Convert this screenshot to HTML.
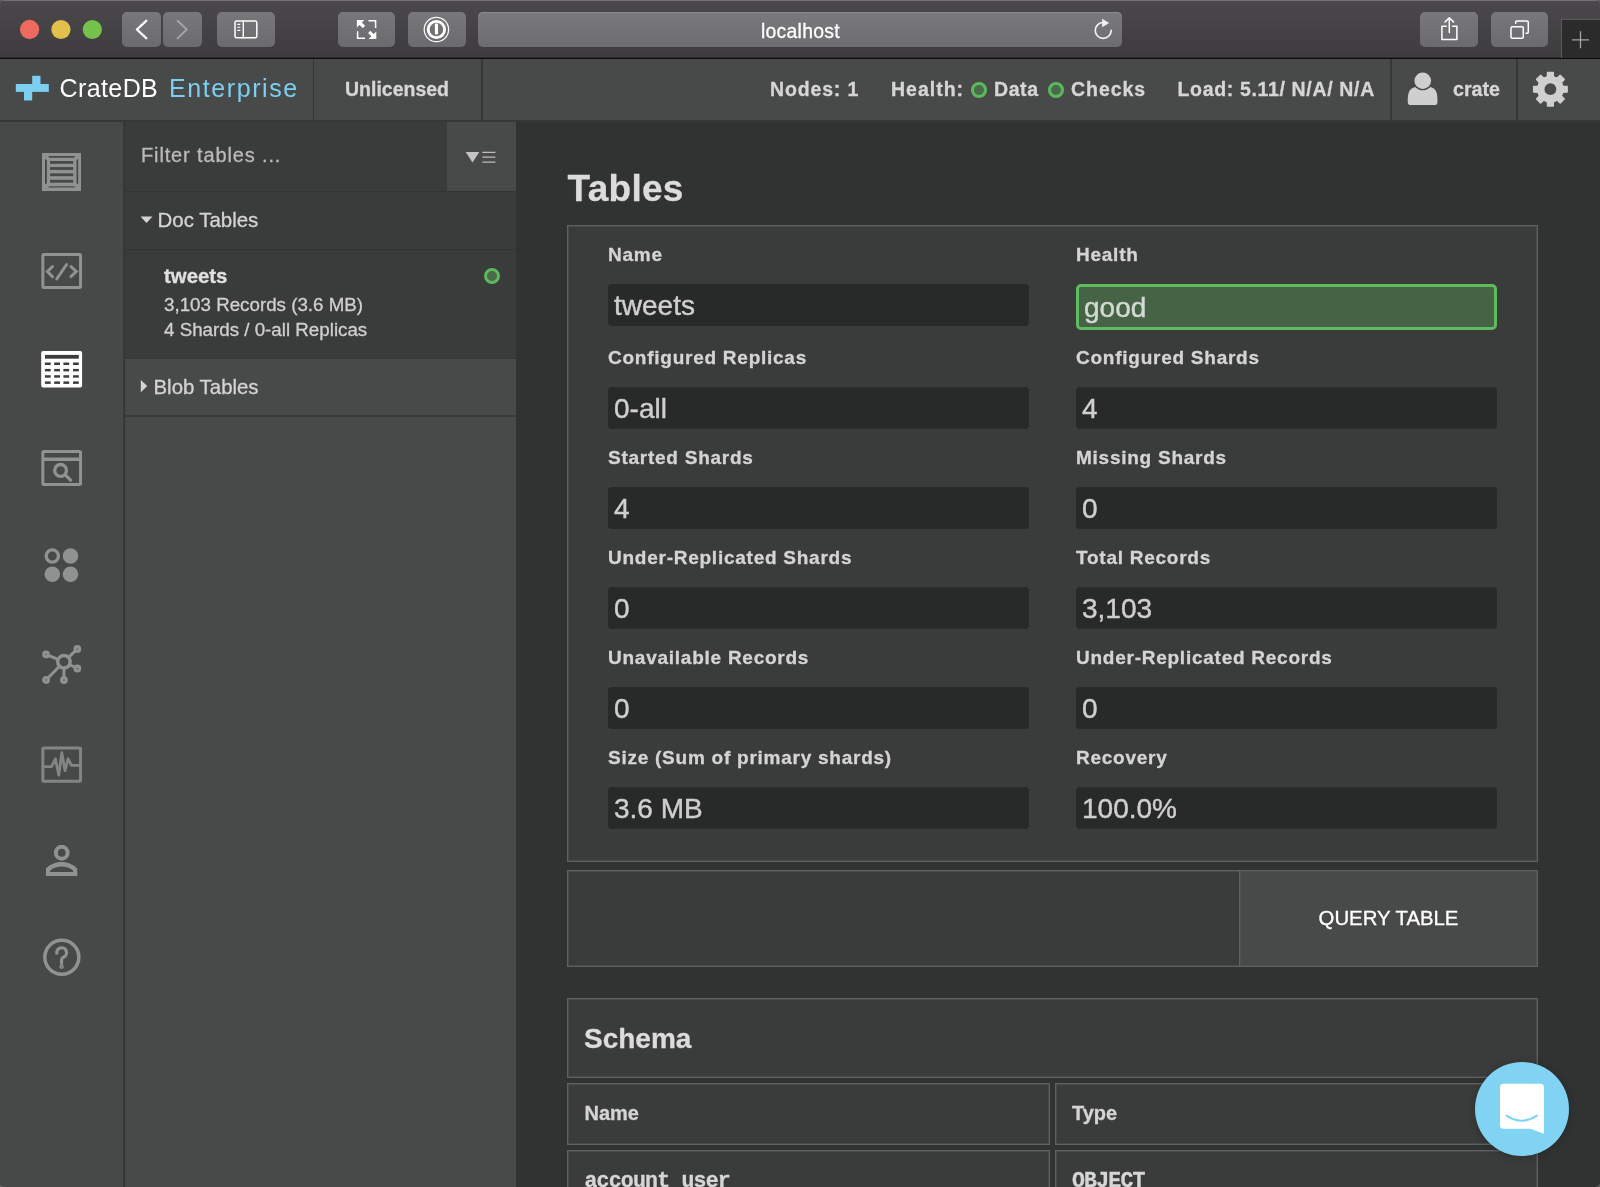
<!DOCTYPE html>
<html><head><meta charset="utf-8">
<style>
*{box-sizing:border-box;margin:0;padding:0}
#root{-webkit-text-stroke:.3px}
html,body{width:1600px;height:1187px;overflow:hidden;background:#313332;font-family:"Liberation Sans",sans-serif;color:#d9d9d9}
.abs{position:absolute}
#titlebar{left:0;top:0;width:1600px;height:58px;background:linear-gradient(#4a484b,#3e3c3f);border-top:1px solid #737173}
#tbline{left:0;top:57px;width:1600px;height:3px;background:linear-gradient(#2b2a2c 0,#2b2a2c 33%,#0c0c0c 33%,#0c0c0c 67%,#323433 67%)}
.tl{width:19px;height:19px;border-radius:50%;top:20px}
.btn{top:12px;height:35px;border-radius:5px;background:linear-gradient(#78787a,#6b6b6d)}
#url{left:478px;top:12px;width:644px;height:35px;border-radius:5px;background:linear-gradient(#7a797b,#6d6c6e);box-shadow:inset 0 1px 0 #8a898b}
#header{left:0;top:59px;width:1600px;height:61px;background:#484a49}
#hline{left:0;top:120px;width:1600px;height:2px;background:#363837}
.hsep{top:59px;width:2px;height:61px;background:#353736}
.htxt{font-weight:bold;font-size:19.5px;color:#d6d6d6;top:78px;line-height:22px;white-space:nowrap}
.dot{width:15px;height:15px;border-radius:50%;border:3px solid #5cb85c;background:#4a6a4b}
#nav{left:0;top:122px;width:123px;height:1065px;background:#474948}
#navline{left:123px;top:122px;width:2px;height:1065px;background:linear-gradient(90deg,#3a3c3b 50%,#323433 50%)}
#list{left:125px;top:122px;width:391px;height:1065px;background:#484a49}
.panel{background:#3a3c3b;border:1px solid #5f6160;box-shadow:inset 0 0 0 1px #484a49}
.lbl{font-weight:bold;font-size:19px;letter-spacing:.75px;margin-top:.6px;color:#d4d4d4;line-height:22px;white-space:nowrap}
.inp{height:42px;width:421px;border-radius:4px;background:#282a29;font-size:28px;line-height:43.6px;-webkit-text-stroke:.42px;padding-left:6px;color:#cfcfcf;white-space:nowrap}
.good{height:46px;border:3px solid #5ebc5f;background:#466346;line-height:41.6px;padding-left:5px;border-radius:5px;color:#d3d9d3}
.hd{font-weight:bold;font-size:20px;line-height:22px;color:#d4d4d4;white-space:nowrap}
.mono{font-family:"Liberation Mono",monospace;font-weight:bold;font-size:21.5px;letter-spacing:-.78px;line-height:24px;color:#d6d6d6;white-space:nowrap}
</style></head><body>
<div id="root" style="position:absolute;left:0;top:0;width:1600px;height:1187px;overflow:hidden;will-change:transform">
<!-- Safari title bar -->
<div id="titlebar" class="abs"></div>
<div id="tbline" class="abs"></div>
<svg class="abs" style="left:15px;top:15px" width="95" height="30" viewBox="15 15 95 30"><circle cx="29.6" cy="29.5" r="9.65" fill="#ee6a5e"/><circle cx="60.95" cy="29.5" r="9.6" fill="#e1c04c"/><circle cx="92.3" cy="29.5" r="9.6" fill="#75c14a"/></svg>
<div class="abs btn" style="left:122px;width:39px"></div>
<div class="abs btn" style="left:163px;width:39px"></div>
<div class="abs btn" style="left:217px;width:58px"></div>
<div class="abs btn" style="left:337.5px;width:57.5px"></div>
<div class="abs btn" style="left:408px;width:58px"></div>
<div id="url" class="abs"></div>
<div class="abs" style="left:761px;top:20.2px;font-size:19.4px;line-height:22px;letter-spacing:.25px;color:#fff">localhost</div>
<div class="abs btn" style="left:1420px;width:58px"></div>
<div class="abs btn" style="left:1490.7px;width:57.7px"></div>

<!-- Toolbar icons -->
<svg class="abs" style="left:122px;top:12px" width="160" height="35" viewBox="122 12 160 35" fill="none" stroke-linecap="round" stroke-linejoin="round">
<polyline points="146.2,20.8 136.9,29.5 146.2,38.2" stroke="#fff" stroke-width="2.3"/>
<polyline points="177.6,20.8 186.8,29.5 177.6,38.2" stroke="#a3a2a4" stroke-width="2"/>
<rect x="235" y="21" width="21.8" height="16.8" rx="1.5" stroke="#fff" stroke-width="1.5"/>
<line x1="243.3" y1="21" x2="243.3" y2="38" stroke="#fff" stroke-width="1.4"/>
<path d="M237.3,24.4h3M237.3,27.3h3M237.3,30.4h3" stroke="#fff" stroke-width="1.1" stroke-linecap="butt"/>
</svg>
<svg class="abs" style="left:338px;top:12px" width="130" height="35" viewBox="338 12 130 35" fill="none">
<g stroke="#fff" stroke-width="1.5">
<polyline points="368.5,20.7 375.6,20.7 375.6,28"/>
<polyline points="357.6,31.3 357.6,38.3 365,38.3"/>
</g>
<g fill="#fff">
<polygon points="356.9,19.9 364.4,19.9 356.9,27.6"/>
<polygon points="376.3,39 368.6,39 376.3,31.4"/>
</g>
<g stroke="#fff" stroke-width="3.2"><line x1="359.5" y1="22.5" x2="364" y2="27"/><line x1="373.7" y1="36.4" x2="369.2" y2="31.9"/></g>
<circle cx="436.4" cy="29.5" r="12.2" stroke="#fff" stroke-width="1.2"/>
<circle cx="436.4" cy="29.5" r="8.2" stroke="#fff" stroke-width="2.8"/>
<rect x="434.9" y="23.6" width="3.1" height="11" rx="1" fill="#fff"/>
</svg>
<svg class="abs" style="left:1090px;top:14px" width="26" height="30" viewBox="1090 14 26 30" fill="none">
<path d="M1103.2,22.45 A7.95 7.95 0 1 0 1111.15,30.4" stroke="#f0f0f0" stroke-width="1.7" stroke-linecap="round"/>
<polygon points="1102.1,18.7 1109.2,23 1102.1,27.3" fill="#f0f0f0"/>
</svg>
<svg class="abs" style="left:1420px;top:12px" width="130" height="35" viewBox="1420 12 130 35" fill="none" stroke="#fff" stroke-width="1.5" stroke-linejoin="round" stroke-linecap="round">
<path d="M1446.2,26.3 H1441.9 V39.5 H1456.9 V26.3 H1452.6" />
<path d="M1449.3,32.4 V17.9 M1445.1,21.9 L1449.3,17.7 L1453.5,21.9"/>
<rect x="1511" y="26.7" width="12.3" height="11.5" rx="1.3"/>
<path d="M1515.7,23.6 V22.3 Q1515.7,21 1517,21 H1527 Q1528.3,21 1528.3,22.3 V32 Q1528.3,33.3 1527,33.3 H1526"/>
</svg>
<!-- new tab -->
<div class="abs" style="left:1561px;top:19px;width:39px;height:39px;background:#2b2b2c;border-left:1px solid #59585a;border-top:1px solid #59585a"></div>
<svg class="abs" style="left:1570px;top:30px" width="22" height="20" viewBox="1570 30 22 20"><path d="M1572,39.8h17M1580.5,31.3v17" stroke="#a4a4a5" stroke-width="1.3" fill="none"/></svg>
<!-- App header -->
<div id="header" class="abs"></div>
<div id="hline" class="abs"></div>
<div class="abs hsep" style="left:313px;width:1px"></div>
<div class="abs hsep" style="left:481px"></div>
<div class="abs hsep" style="left:1390px"></div>
<div class="abs hsep" style="left:1516px"></div>
<div class="abs htxt" style="left:345px">Unlicensed</div>
<div class="abs htxt" style="left:770px;letter-spacing:.85px">Nodes: 1</div>
<div class="abs htxt" style="left:891px;letter-spacing:1px">Health:</div>
<div class="abs dot" style="left:971.2px;top:82px;width:15.8px;height:15.6px"></div>
<div class="abs htxt" style="left:994px;letter-spacing:.58px">Data</div>
<div class="abs dot" style="left:1048.3px;top:82px;width:15.8px;height:15.6px"></div>
<div class="abs htxt" style="left:1071px;letter-spacing:.95px">Checks</div>
<div class="abs htxt" style="left:1177.5px;letter-spacing:.66px">Load: 5.11/ N/A/ N/A</div>
<div class="abs htxt" style="left:1453px;font-size:19.7px">crate</div>
<!-- Logo -->
<svg class="abs" style="left:15px;top:75px" width="35" height="26" viewBox="15 75 35 26" fill="#7ccff0">
<rect x="15.8" y="84" width="33" height="7.9"/><rect x="32.2" y="75.8" width="8.3" height="9"/><rect x="24" y="91" width="8.2" height="9.5"/>
</svg>
<div class="abs" style="left:59.5px;top:74.4px;font-size:25px;line-height:28px;letter-spacing:.4px;color:#fff;white-space:nowrap;-webkit-text-stroke:0">CrateDB</div>
<div class="abs" style="left:169px;top:74.4px;font-size:25px;line-height:28px;letter-spacing:1.58px;color:#7ccff0;white-space:nowrap;-webkit-text-stroke:0">Enterprise</div>
<!-- user + gear -->
<svg class="abs" style="left:1405px;top:70px" width="36" height="38" viewBox="1405 70 36 38">
<path d="M1407.75,102 C1407.75,94 1408.5,88.3 1415.5,87 C1419,91 1426.5,91 1430,87 C1437,88.3 1437.5,94 1437.5,102 Q1437.5,105.1 1434.4,105.1 H1410.85 Q1407.75,105.1 1407.75,102Z" fill="#cfcfcf"/>
<circle cx="1422.75" cy="80.75" r="9.6" fill="#484a49"/>
<circle cx="1422.75" cy="80.75" r="8.3" fill="#cfcfcf"/>
</svg>
<svg class="abs" style="left:1532.4px;top:71.3px" width="36" height="36" viewBox="-0.4 -0.2 36 36">
<path d="M15.06,5.75 L15.23,1.33 L20.77,1.33 L20.94,5.75 L24.58,7.26 L27.83,4.25 L31.75,8.17 L28.74,11.42 L30.25,15.06 L34.67,15.23 L34.67,20.77 L30.25,20.94 L28.74,24.58 L31.75,27.83 L27.83,31.75 L24.58,28.74 L20.94,30.25 L20.77,34.67 L15.23,34.67 L15.06,30.25 L11.42,28.74 L8.17,31.75 L4.25,27.83 L7.26,24.58 L5.75,20.94 L1.33,20.77 L1.33,15.23 L5.75,15.06 L7.26,11.42 L4.25,8.17 L8.17,4.25 L11.42,7.26Z" fill="#cfcfcf" stroke="#cfcfcf" stroke-width="1.6" stroke-linejoin="round"/>
<circle cx="18" cy="18" r="13.2" fill="#cfcfcf"/>
<circle cx="18" cy="18" r="5.9" fill="#484a49"/>
</svg>
<!-- Left nav + list -->
<div id="nav" class="abs"></div>
<div id="navline" class="abs"></div>
<div id="list" class="abs"></div>

<!-- List panel -->
<div class="abs" style="left:125px;top:122px;width:391px;height:69px;background:#3a3c3b"></div>
<div class="abs" style="left:447px;top:122px;width:69px;height:69px;background:#484a49"></div>
<div class="abs" style="left:125px;top:191px;width:391px;height:1px;background:#333534"></div>
<div class="abs" style="left:125px;top:192px;width:391px;height:57px;background:#3a3c3b"></div>
<div class="abs" style="left:125px;top:249px;width:391px;height:1px;background:#333534"></div>
<div class="abs" style="left:125px;top:250px;width:391px;height:108px;background:#3a3c3b"></div>
<div class="abs" style="left:125px;top:358px;width:391px;height:1px;background:#353736"></div>
<div class="abs" style="left:125px;top:415px;width:391px;height:2px;background:#383a39"></div>
<div class="abs" style="left:141px;top:142.9px;font-size:20px;letter-spacing:.86px;line-height:24px;color:#bababa;white-space:nowrap">Filter tables ...</div>
<svg class="abs" style="left:465px;top:150px" width="32" height="14" viewBox="465 150 32 14"><path d="M465.7 152h13.6L472.5 162.5z" fill="#c4c4c4"/><path d="M482.4 152.3h13M482.4 157.2h13M482.4 162.1h13" stroke="#bcbcbc" stroke-width="1.3"/></svg>
<svg class="abs" style="left:140px;top:216px" width="13" height="8" viewBox="0 0 13 8"><path d="M0.5 0.5h12L6.5 7z" fill="#d4d4d4"/></svg>
<div class="abs" style="left:157.6px;top:207.5px;font-size:20.45px;line-height:24px;color:#d4d4d4;white-space:nowrap">Doc Tables</div>
<div class="abs" style="left:164px;top:264.4px;font-size:20.4px;font-weight:bold;line-height:24px;color:#e0e0e0;white-space:nowrap">tweets</div>
<div class="abs" style="left:164px;top:293.7px;font-size:18.75px;line-height:22px;color:#d0d0d0;white-space:nowrap">3,103 Records (3.6 MB)</div>
<div class="abs" style="left:164px;top:318.6px;font-size:18.75px;line-height:22px;color:#d0d0d0;white-space:nowrap">4 Shards / 0-all Replicas</div>
<div class="abs dot" style="left:484px;top:268px;width:16px;height:16px"></div>
<svg class="abs" style="left:140px;top:379px" width="8" height="14" viewBox="0 0 8 14"><path d="M0.8 1v12.2L7.3 7.1z" fill="#d4d4d4"/></svg>
<div class="abs" style="left:153.5px;top:374.5px;font-size:20.4px;line-height:24px;color:#d4d4d4;white-space:nowrap">Blob Tables</div>

<!-- Nav icons -->
<svg class="abs" style="left:42px;top:153px" width="39" height="38" viewBox="0 0 39 38">
<rect width="39" height="38" fill="#909291"/>
<g fill="#474948">
<polygon points="6.2,2.9 33.2,2.9 31.7,4.7 7.4,4.7"/>
<polygon points="7.2,33.2 32.2,33.2 33.2,34.6 6.2,34.6"/>
<polygon points="3,5.9 4.9,7 4.9,30.2 3,31.2"/>
<polygon points="34.5,7 36.2,5.9 36.2,31.2 34.5,30.2"/>
<rect x="8" y="8" width="23.2" height="2.8"/>
<rect x="8" y="14.1" width="23.2" height="2.8"/>
<rect x="8" y="20.4" width="23.2" height="2.8"/>
<rect x="8" y="26.8" width="23.2" height="2.9"/>
</g></svg>
<svg class="abs" style="left:41px;top:252px" width="42" height="38" viewBox="0 0 42 38" fill="none" stroke="#909291" stroke-width="3" stroke-linecap="round" stroke-linejoin="round">
<rect x="1.85" y="2.4" width="37.7" height="33.1" rx="1"/>
<polyline points="11.5,14.5 6.4,19.6 11.5,24.6" stroke-linejoin="miter"/>
<line x1="25.6" y1="12.5" x2="15.8" y2="26.9"/>
<polyline points="29.9,14.5 35.3,19.6 29.9,24.6" stroke-linejoin="miter"/>
</svg>
<svg class="abs" style="left:41px;top:351px" width="42" height="37" viewBox="0 0 42 37">
<rect x="0.2" y="0" width="40.9" height="36.5" rx="2" fill="#fff"/>
<g fill="#3c3e3d">
<rect x="3.9" y="3.9" width="33.9" height="3.8"/>
<rect x="3.9" y="11.5" width="5.8" height="2.5"/><rect x="13.2" y="11.5" width="5.8" height="2.5"/><rect x="22.4" y="11.5" width="5.8" height="2.5"/><rect x="32" y="11.5" width="5.8" height="2.5"/><rect x="3.9" y="17.9" width="5.8" height="2.5"/><rect x="13.2" y="17.9" width="5.8" height="2.5"/><rect x="22.4" y="17.9" width="5.8" height="2.5"/><rect x="32" y="17.9" width="5.8" height="2.5"/><rect x="3.9" y="24.2" width="5.8" height="2.5"/><rect x="13.2" y="24.2" width="5.8" height="2.5"/><rect x="22.4" y="24.2" width="5.8" height="2.5"/><rect x="32" y="24.2" width="5.8" height="2.5"/><rect x="3.9" y="30.4" width="5.8" height="2.5"/><rect x="13.2" y="30.4" width="5.8" height="2.5"/><rect x="22.4" y="30.4" width="5.8" height="2.5"/><rect x="32" y="30.4" width="5.8" height="2.5"/>
</g></svg>
<svg class="abs" style="left:41px;top:449px" width="42" height="38" viewBox="0 0 42 38" fill="none" stroke="#909291" stroke-width="3" stroke-linejoin="round">
<rect x="1.85" y="2.4" width="37.7" height="33.1" rx="1"/>
<line x1="2" y1="10.2" x2="39" y2="10.2" stroke-width="3.4"/>
<circle cx="19.6" cy="21.4" r="5.9" stroke-width="3.3"/>
<line x1="24" y1="25.6" x2="29.6" y2="31.2" stroke-width="3.2" stroke-linecap="round"/>
</svg>
<svg class="abs" style="left:41px;top:545px" width="42" height="40" viewBox="0 0 42 40">
<circle cx="11.3" cy="11" r="6.1" fill="none" stroke="#909291" stroke-width="3.3"/>
<circle cx="29.5" cy="11" r="7.75" fill="#909291"/>
<circle cx="11.3" cy="29.2" r="7.75" fill="#909291"/>
<circle cx="29.5" cy="29.2" r="7.75" fill="#909291"/>
</svg>
<svg class="abs" style="left:41px;top:643px" width="42" height="44" viewBox="0 0 42 44" fill="none" stroke="#909291" stroke-width="3">
<line x1="22.95" y1="18.8" x2="5.05" y2="11.4"/>
<line x1="22.95" y1="18.8" x2="36.35" y2="5.9"/>
<line x1="22.95" y1="18.8" x2="36.35" y2="25.5"/>
<line x1="22.95" y1="18.8" x2="5.05" y2="37"/>
<line x1="22.95" y1="18.8" x2="22.95" y2="37"/>
<circle cx="22.95" cy="18.8" r="6.25" fill="#474948" stroke-width="3.4"/>
<g stroke-width="3.2" fill="#474948">
<circle cx="5.05" cy="11.4" r="2.3"/><circle cx="36.35" cy="5.9" r="2.3"/><circle cx="36.35" cy="25.5" r="2.3"/><circle cx="5.05" cy="37" r="2.3"/><circle cx="22.95" cy="37" r="2.3"/>
</g></svg>
<svg class="abs" style="left:41px;top:746px" width="42" height="38" viewBox="0 0 42 38" fill="none" stroke="#838584" stroke-width="3" stroke-linejoin="round" stroke-linecap="round">
<rect x="1.85" y="2" width="37.7" height="33.3" rx="1"/>
<path d="M3.6,20.6 H10.6 L14.4,12.8 L17.8,29.2 L20.8,6.7 L24,24.6 L27.1,12.8 L30.4,19.3 H38" stroke-width="2.8"/>
</svg>
<svg class="abs" style="left:41px;top:845px" width="42" height="34" viewBox="0 0 42 34">
<circle cx="20.73" cy="7.73" r="5.9" fill="none" stroke="#909291" stroke-width="4"/>
<path fill-rule="evenodd" fill="#909291" d="M4.9,31 V23.6 C9,19 16,17.1 20.6,17.1 C25.2,17.1 32.2,19 36.25,23.6 V31 Z M9,27 V25.8 C12,23 17,21.6 20.6,21.6 C24.2,21.6 29.2,23 32.2,25.8 V27 Z"/>
</svg>
<svg class="abs" style="left:41px;top:937px" width="42" height="42" viewBox="-21 -21 42 42" fill="none" stroke="#909291" stroke-width="3.2" stroke-linecap="round">
<g transform="translate(-0.17,-0.7)">
<circle cx="0" cy="0" r="17" stroke-width="3.5"/>
<path d="M-5.05,-4.05 A4.9 4.9 0 1 1 1.6,-0.1 Q-0.25,0.8 -0.25,2.6 V6"/>
<circle cx="-0.25" cy="9.35" r="1.4" stroke-width="1.6"/>
</g></svg>
<!-- Main -->
<div class="abs" style="left:567.6px;top:168px;font-size:37px;letter-spacing:.25px;font-weight:bold;line-height:42px;color:#dcdcdc">Tables</div>
<div class="abs panel" style="left:567px;top:225px;width:970.5px;height:637px"></div>
<div class="abs panel" style="left:567px;top:870px;width:970.5px;height:97px"></div>
<div class="abs panel" style="left:567px;top:998px;width:970.5px;height:80px"></div>
<!-- Form -->
<div class="abs lbl" style="left:608px;top:243px">Name</div>
<div class="abs inp" style="left:608px;top:284px">tweets</div>
<div class="abs lbl" style="left:1076px;top:243px">Health</div>
<div class="abs inp good" style="left:1076px;top:284px">good</div>
<div class="abs lbl" style="left:608px;top:346px">Configured Replicas</div>
<div class="abs inp" style="left:608px;top:387px">0-all</div>
<div class="abs lbl" style="left:1076px;top:346px">Configured Shards</div>
<div class="abs inp" style="left:1076px;top:387px">4</div>
<div class="abs lbl" style="left:608px;top:446px">Started Shards</div>
<div class="abs inp" style="left:608px;top:487px">4</div>
<div class="abs lbl" style="left:1076px;top:446px">Missing Shards</div>
<div class="abs inp" style="left:1076px;top:487px">0</div>
<div class="abs lbl" style="left:608px;top:546px">Under-Replicated Shards</div>
<div class="abs inp" style="left:608px;top:587px">0</div>
<div class="abs lbl" style="left:1076px;top:546px">Total Records</div>
<div class="abs inp" style="left:1076px;top:587px">3,103</div>
<div class="abs lbl" style="left:608px;top:646px">Unavailable Records</div>
<div class="abs inp" style="left:608px;top:687px">0</div>
<div class="abs lbl" style="left:1076px;top:646px">Under-Replicated Records</div>
<div class="abs inp" style="left:1076px;top:687px">0</div>
<div class="abs lbl" style="left:608px;top:746px">Size (Sum of primary shards)</div>
<div class="abs inp" style="left:608px;top:787px">3.6 MB</div>
<div class="abs lbl" style="left:1076px;top:746px">Recovery</div>
<div class="abs inp" style="left:1076px;top:787px">100.0%</div>
<!-- Query table -->
<div class="abs" style="left:1239px;top:871px;width:298px;height:95px;background:#484a49;border-left:1px solid #5f6160;box-shadow:inset 0 0 0 1px #4f5150"></div>
<div class="abs" style="left:1240px;top:905.7px;width:297px;text-align:center;font-size:20.35px;line-height:24px;color:#fff;white-space:nowrap">QUERY TABLE</div>
<!-- Schema -->
<div class="abs" style="left:584px;top:1021.5px;font-size:28px;font-weight:bold;line-height:34px;color:#dcdcdc">Schema</div>
<div class="abs panel" style="left:567px;top:1083px;width:483px;height:62px"></div>
<div class="abs panel" style="left:1055px;top:1083px;width:482.5px;height:62px"></div>
<div class="abs hd" style="left:584.5px;top:1102px">Name</div>
<div class="abs hd" style="left:1072px;top:1102px">Type</div>
<div class="abs panel" style="left:567px;top:1150px;width:483px;height:62px"></div>
<div class="abs panel" style="left:1055px;top:1150px;width:482.5px;height:62px"></div>
<div class="abs mono" style="left:584.5px;top:1168.8px">account_user</div>
<div class="abs mono" style="left:1072px;top:1168.8px">OBJECT</div>
<!-- Chat bubble -->
<div class="abs" style="left:1475px;top:1062px;width:94px;height:94px;border-radius:50%;background:#80d3f2;box-shadow:0 1px 8px rgba(0,0,0,.22)"></div>

<svg class="abs" style="left:1498px;top:1082px" width="48" height="54" viewBox="1498 1082 48 54">
<path d="M1503.5,1083.8 H1540.4 Q1543.9,1083.8 1543.9,1087.3 V1133.7 L1530.4,1128.7 H1503.5 Q1500,1128.7 1500,1125.2 V1087.3 Q1500,1083.8 1503.5,1083.8Z" fill="#fff"/>
<path d="M1506.7,1115.6 Q1521.75,1125.8 1536.8,1115.6" stroke="#80d3f2" stroke-width="2.1" fill="none" stroke-linecap="round"/>
</svg>

<!-- window corners -->
<svg class="abs" style="left:0;top:0" width="1600" height="1187" viewBox="0 0 1600 1187" pointer-events="none">
<path d="M0,0H5A5 5 0 0 0 0,5Z" fill="#5c5c5d"/>
<path d="M1600,0H1595A5 5 0 0 1 1600,5Z" fill="#5c5c5d"/>
<path d="M0,1187H5A5 5 0 0 1 0,1182Z" fill="#5c5c5d"/>
<path d="M1600,1187H1595A5 5 0 0 0 1600,1182Z" fill="#5c5c5d"/>
</svg>
</div></body></html>
